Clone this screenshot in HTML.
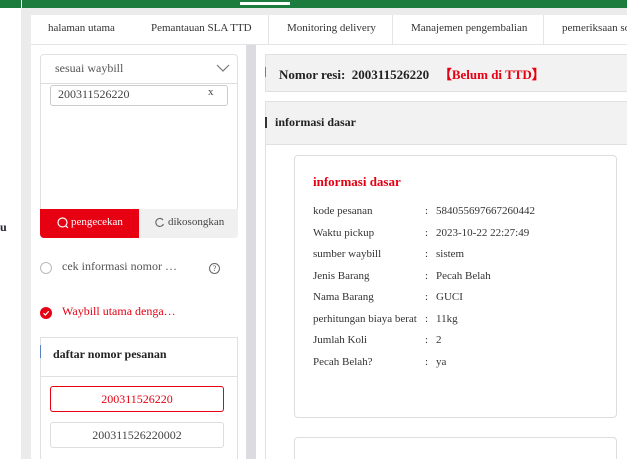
<!DOCTYPE html>
<html style="overflow:hidden;width:627px;height:459px"><head><style>
*{margin:0;padding:0;box-sizing:border-box}
body{width:627px;height:459px;overflow:hidden;background:#ebebeb;font-family:"Liberation Serif",serif;color:#333;position:relative;font-size:12px}
.a{position:absolute}
</style></head><body>
<div class="a" style="left:0;top:0;width:627px;height:8px;background:#1b7c3d"></div>
<div class="a" style="left:21px;top:0;width:1px;height:8px;background:#fff"></div>
<div class="a" style="left:240px;top:2px;width:50px;height:3px;background:#fff"></div>
<div class="a" style="left:0;top:8px;width:21px;height:451px;background:#fff"></div>
<div class="a" style="left:0;top:220px;font-size:12px;font-weight:bold;color:#223">u</div>
<div class="a" style="left:31px;top:15px;width:596px;height:444px;background:#fff"></div>
<div class="a" style="left:31px;top:44px;width:596px;height:1px;background:#e4e4e4"></div>
<div class="a" style="left:48px;top:22px;font-size:11px">halaman utama</div>
<div class="a" style="left:151px;top:22px;font-size:11px">Pemantauan SLA TTD</div>
<div class="a" style="left:268px;top:15px;width:1px;height:29px;background:#e4e4e4"></div>
<div class="a" style="left:287px;top:22px;font-size:11px">Monitoring delivery</div>
<div class="a" style="left:392px;top:15px;width:1px;height:29px;background:#e4e4e4"></div>
<div class="a" style="left:411px;top:22px;font-size:11px">Manajemen pengembalian</div>
<div class="a" style="left:543px;top:15px;width:1px;height:29px;background:#e4e4e4"></div>
<div class="a" style="left:562px;top:22px;font-size:11px;white-space:nowrap">pemeriksaan so</div>
<div class="a" style="left:246px;top:45px;width:10px;height:414px;background:#dcdce0"></div>
<div class="a" style="left:40px;top:54px;width:198px;height:184px;border:1px solid #e0e0e0;border-radius:4px"></div>
<div class="a" style="left:40px;top:83px;width:198px;height:1px;background:#ddd"></div>
<div class="a" style="left:55px;top:61px;font-size:12px;color:#555">sesuai waybill</div>
<svg class="a" style="left:216px;top:64px" width="14" height="9"><path d="M1 1L7 7L13 1" stroke="#777" fill="none" stroke-width="1.2"/></svg>
<div class="a" style="left:50px;top:85px;width:178px;height:21px;border:1px solid #ccc;border-radius:3px"></div>
<div class="a" style="left:58px;top:87px;font-size:12px;color:#444">200311526220</div>
<div class="a" style="left:208px;top:86px;font-size:11px;color:#444">x</div>
<div class="a" style="left:40px;top:209px;width:99px;height:29px;background:#e60012;border-radius:0 0 0 4px"></div>
<div class="a" style="left:139px;top:209px;width:99px;height:29px;background:#f0f0f0;border-radius:0 0 4px 0"></div>
<svg class="a" style="left:57px;top:217px" width="12" height="12"><circle cx="5.5" cy="5.5" r="4.5" stroke="#fff" fill="none" stroke-width="1.2"/><path d="M9 9L11 11" stroke="#fff" stroke-width="1.2"/></svg>
<div class="a" style="left:71px;top:216px;font-size:11px;color:#fff">pengecekan</div>
<svg class="a" style="left:154px;top:217px" width="11" height="11"><path d="M9 3A4 4 0 1 0 9.5 7" stroke="#666" fill="none" stroke-width="1.1"/></svg>
<div class="a" style="left:168px;top:216px;font-size:11px;color:#444">dikosongkan</div>
<div class="a" style="left:40px;top:262px;width:12px;height:12px;border:1px solid #bbb;border-radius:50%"></div>
<div class="a" style="left:62px;top:259px;font-size:12px;color:#555">cek informasi nomor …</div>
<div class="a" style="left:209px;top:263px;width:11px;height:11px;border:1px solid #666;border-radius:50%;font-size:8px;text-align:center;line-height:9px;color:#555">?</div>
<div class="a" style="left:40px;top:307px;width:12px;height:12px;background:#e60012;border-radius:50%"></div>
<svg class="a" style="left:40px;top:307px" width="12" height="12"><path d="M3.5 6.2L5.3 8L8.7 4.3" stroke="#fff" fill="none" stroke-width="1.2"/></svg>
<div class="a" style="left:62px;top:304px;font-size:12px;color:#e60012">Waybill utama denga…</div>
<div class="a" style="left:40px;top:337px;width:198px;height:122px;border:1px solid #e0e0e0;border-bottom:none"></div>
<div class="a" style="left:40px;top:345px;width:1px;height:13px;background:#5b7fc7"></div>
<div class="a" style="left:40px;top:376px;width:198px;height:1px;background:#e0e0e0"></div>
<div class="a" style="left:53px;top:347px;font-size:12px;font-weight:bold;color:#222">daftar nomor pesanan</div>
<div class="a" style="left:50px;top:386px;width:174px;height:26px;border:1px solid #e60012;border-radius:3px;text-align:center;line-height:24px;font-size:12px;color:#e60012">200311526220</div>
<div class="a" style="left:50px;top:422px;width:174px;height:26px;border:1px solid #ddd;border-radius:3px;text-align:center;line-height:24px;font-size:12px;color:#444">200311526220002</div>
<div class="a" style="left:265px;top:54px;width:362px;height:38px;background:#f2f2f2;border:1px solid #e0e0e0;border-right:none"></div>
<div class="a" style="left:265px;top:67px;width:1px;height:10px;background:#5b7fc7"></div>
<div class="a" style="left:279px;top:64px;font-size:13px;font-weight:bold;color:#222;white-space:nowrap">Nomor resi:&nbsp; 200311526220 &nbsp;&nbsp;<span style="color:#e60012">【Belum di TTD】</span></div>
<div class="a" style="left:265px;top:101px;width:362px;height:358px;border:1px solid #e0e0e0;border-right:none;border-bottom:none;background:#fff"></div>
<div class="a" style="left:266px;top:102px;width:361px;height:43px;background:#f2f2f2;border-bottom:1px solid #e0e0e0"></div>
<div class="a" style="left:265px;top:117px;width:2px;height:11px;background:#333"></div>
<div class="a" style="left:275px;top:115px;font-size:12px;font-weight:bold;color:#222">informasi dasar</div>
<div class="a" style="left:294px;top:155px;width:323px;height:263px;border:1px solid #ddd;border-radius:4px"></div>
<div class="a" style="left:294px;top:437px;width:323px;height:22px;border:1px solid #ddd;border-bottom:none;border-radius:4px 4px 0 0"></div>
<div class="a" style="left:313px;top:174px;font-size:13px;font-weight:bold;color:#e60012">informasi dasar</div>
<div class="a" style="left:313px;top:201px;font-size:11px;line-height:21.5px;color:#333">kode pesanan<br>Waktu pickup<br>sumber waybill<br>Jenis Barang<br>Nama Barang<br>perhitungan biaya berat<br>Jumlah Koli<br>Pecah Belah?</div>
<div class="a" style="left:425px;top:201px;font-size:11px;line-height:21.5px">:<br>:<br>:<br>:<br>:<br>:<br>:<br>:</div>
<div class="a" style="left:436px;top:201px;font-size:11px;line-height:21.5px">584055697667260442<br>2023-10-22 22:27:49<br>sistem<br>Pecah Belah<br>GUCI<br>11kg<br>2<br>ya</div>
</body></html>
